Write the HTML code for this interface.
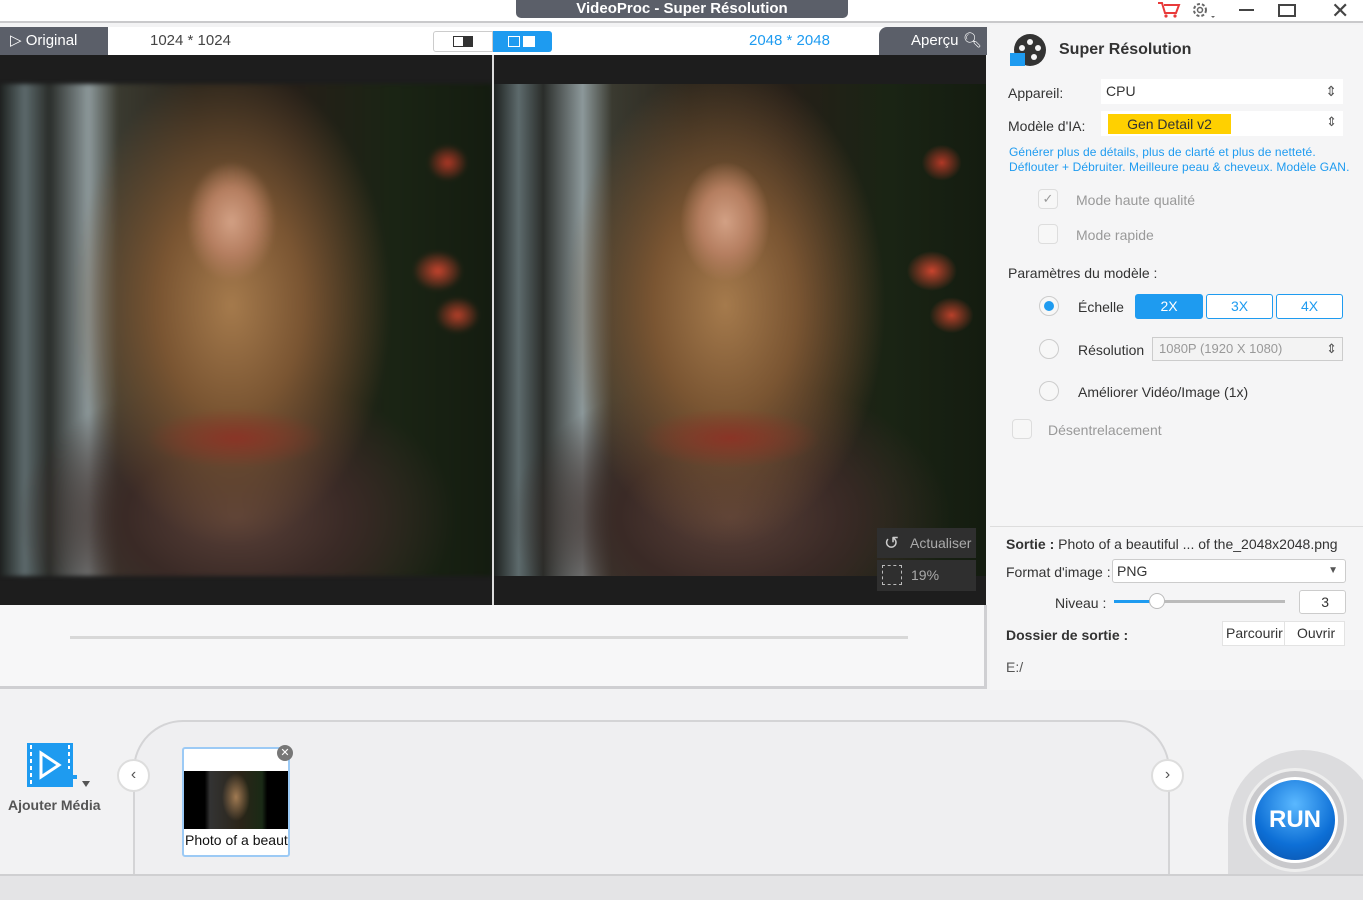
<!DOCTYPE html>
<html><head><meta charset="utf-8">
<style>
*{margin:0;padding:0;box-sizing:border-box}
body{width:1363px;height:900px;overflow:hidden;background:#f3f3f4;font-family:"Liberation Sans",sans-serif;font-size:13px;color:#333;position:relative}
.abs{position:absolute}
.photo{position:absolute;overflow:hidden;
background:
radial-gradient(ellipse 45px 60px at 47% 28%, #d2a084 0%, #b57e60 55%, rgba(150,100,70,0) 100%),
radial-gradient(ellipse 90px 30px at 48% 72%, #8a3426 0%, rgba(100,40,30,0) 100%),
radial-gradient(ellipse 160px 240px at 47% 45%, #a57a4c 0%, #7a5532 45%, rgba(60,40,22,0) 100%),
radial-gradient(ellipse 220px 140px at 48% 88%, #5a4038 0%, #3a2a26 50%, rgba(30,25,22,0) 100%),
radial-gradient(ellipse 25px 20px at 89% 38%, #c8442e 0%, rgba(150,40,30,0) 100%),
radial-gradient(ellipse 22px 18px at 93% 47%, #b8402a 0%, rgba(150,40,30,0) 100%),
radial-gradient(ellipse 20px 18px at 91% 16%, #b03826 0%, rgba(150,40,30,0) 100%),
linear-gradient(90deg, #1e2220 0%, #5d6a6c 5%, #2a2d2a 10%, #8c989a 18%, #3a3a30 24%, #2a251c 40%, #251f18 60%, #1a2414 80%, #141c10 100%);}
.btn{position:absolute;border:1px solid #1e9bf0;color:#1e9bf0;text-align:center;border-radius:3px;font-size:14px;line-height:22px;background:#fff}
.radio{position:absolute;width:20px;height:20px;border-radius:50%;border:1px solid #ccc;background:#f7f7f7}
.chk{position:absolute;width:20px;height:20px;border-radius:4px;border:1px solid #ddd;background:#f7f7f7}
.gray{color:#999}
</style></head><body>
<div class="abs" style="left:0;top:0;width:1363px;height:23px;background:#fff;border-bottom:2px solid #c9c9cb"></div>
<div class="abs" style="left:516px;top:0;width:332px;height:18px;background:#5b5f69;border-radius:0 0 5px 5px;color:#fff;font-weight:bold;font-size:15px;text-align:center;line-height:17px">VideoProc - Super Résolution</div>
<svg class="abs" style="left:1157px;top:1px" width="24" height="18" viewBox="0 0 24 18"><path d="M1 2h4l3 10h11l3-8H7" fill="none" stroke="#e83a3a" stroke-width="2"/><circle cx="9" cy="15" r="1.6" fill="#e83a3a"/><circle cx="18" cy="15" r="1.6" fill="#e83a3a"/></svg>
<svg class="abs" style="left:1190px;top:1px" width="26" height="20" viewBox="0 0 26 20"><circle cx="10" cy="9" r="6" fill="none" stroke="#666" stroke-width="2" stroke-dasharray="3 2"/><circle cx="10" cy="9" r="2.5" fill="none" stroke="#666" stroke-width="1.5"/><path d="M21 15l2 2 2-2z" fill="#666"/></svg>
<div class="abs" style="left:1239px;top:9px;width:15px;height:1.5px;background:#444"></div>
<div class="abs" style="left:1278px;top:4px;width:18px;height:13px;border:2px solid #444"></div>
<div class="abs" style="left:1331px;top:-2px;font-size:22px;color:#444">✕</div>

<div class="abs" style="left:0;top:27px;width:987px;height:28px;background:#fff"></div>
<div class="abs" style="left:0;top:27px;width:108px;height:28px;background:#5b5f69;color:#fff;font-size:15px;line-height:28px;padding-left:10px">▷ Original</div>
<div class="abs" style="left:150px;top:32px;font-size:15px;color:#444">1024 * 1024</div>
<div class="abs" style="left:433px;top:31px;width:60px;height:21px;border:1px solid #ccc;background:#fff;border-radius:3px 0 0 3px"><div class="abs" style="left:19px;top:4px;width:20px;height:11px;border:1.5px solid #333;background:linear-gradient(90deg,#fff 50%,#333 50%)"></div></div>
<div class="abs" style="left:493px;top:31px;width:59px;height:21px;background:#1e9bf0;border-radius:0 3px 3px 0"><div class="abs" style="left:15px;top:5px;width:12px;height:11px;border:1.5px solid #fff"></div><div class="abs" style="left:30px;top:5px;width:12px;height:11px;background:#fff"></div></div>
<div class="abs" style="left:749px;top:32px;font-size:15px;color:#1e9bf0">2048 * 2048</div>
<div class="abs" style="left:879px;top:27px;width:108px;height:28px;background:#5b5f69;color:#fff;font-size:15px;line-height:28px;padding-left:32px;border-radius:8px 0 0 0">Aperçu 🔍︎</div>

<div class="abs" style="left:0;top:55px;width:986px;height:550px;background:#1d1d1d"></div>
<div class="photo" style="left:0;top:84px;width:492px;height:492px;filter:blur(2px)"></div>
<div class="abs" style="left:492px;top:55px;width:2px;height:550px;background:#ddd"></div>
<div class="photo" style="left:494px;top:84px;width:492px;height:492px"></div>
<div class="abs" style="left:877px;top:528px;width:99px;height:30px;background:#2f2f2f;color:#aaa;font-size:14px;line-height:30px;padding-left:33px">Actualiser</div>
<div class="abs" style="left:884px;top:533px;color:#ccc;font-size:18px">↺</div>
<div class="abs" style="left:877px;top:560px;width:99px;height:31px;background:#2f2f2f;color:#aaa;font-size:14px;line-height:31px;padding-left:34px">19%</div>
<div class="abs" style="left:882px;top:565px;width:20px;height:20px;border:1.5px dashed #bbb"></div>
<div class="abs" style="left:0;top:605px;width:987px;height:84px;background:#f7f7f8;border-right:3px solid #cfcfd2;border-bottom:3px solid #cfcfd2"></div>
<div class="abs" style="left:70px;top:636px;width:838px;height:3px;background:#d8d8d8"></div>

<div class="abs" style="left:990px;top:25px;width:373px;height:665px;background:#f5f5f6"></div>
<svg class="abs" style="left:1010px;top:33px" width="38" height="35" viewBox="0 0 38 35"><circle cx="20" cy="17" r="16" fill="#333"/><circle cx="20" cy="9" r="3" fill="#f5f5f6"/><circle cx="12" cy="15" r="3" fill="#f5f5f6"/><circle cx="28" cy="15" r="3" fill="#f5f5f6"/><circle cx="24" cy="24" r="3" fill="#f5f5f6"/><rect x="0" y="20" width="15" height="13" fill="#1e9bf0"/></svg>
<div class="abs" style="left:1059px;top:41px;font-size:16px;font-weight:bold;color:#333">Super Résolution</div>
<div class="abs" style="left:1008px;top:85px;font-size:14px">Appareil:</div>
<div class="abs" style="left:1101px;top:79px;width:242px;height:25px;background:#fff;padding-left:5px;line-height:25px;font-size:14px">CPU<span class="abs" style="right:6px;top:0;color:#555">⇕</span></div>
<div class="abs" style="left:1008px;top:118px;font-size:14px">Modèle d'IA:</div>
<div class="abs" style="left:1101px;top:111px;width:242px;height:25px;background:#fff"><div class="abs" style="left:7px;top:3px;width:123px;height:20px;background:#ffd000;text-align:center;line-height:20px;font-size:14px">Gen Detail v2</div><span class="abs" style="right:6px;top:3px;color:#555">⇕</span></div>
<div class="abs" style="left:1009px;top:145px;font-size:12px;color:#1e9bf0;line-height:15px;white-space:nowrap;letter-spacing:0.1px">Générer plus de détails, plus de clarté et plus de netteté.<br>Déflouter + Débruiter. Meilleure peau &amp; cheveux. Modèle GAN.</div>
<div class="chk" style="left:1038px;top:189px;color:#999;font-size:13px;text-align:center;line-height:18px">✓</div>
<div class="abs gray" style="left:1076px;top:192px;font-size:14px">Mode haute qualité</div>
<div class="chk" style="left:1038px;top:224px"></div>
<div class="abs gray" style="left:1076px;top:227px;font-size:14px">Mode rapide</div>
<div class="abs" style="left:1008px;top:265px;font-size:14px">Paramètres du modèle :</div>
<div class="radio" style="left:1039px;top:296px"><div class="abs" style="left:4px;top:4px;width:10px;height:10px;border-radius:50%;background:#1e9bf0"></div></div>
<div class="abs" style="left:1078px;top:299px;font-size:14px">Échelle</div>
<div class="btn" style="left:1135px;top:294px;width:68px;height:25px;background:#1e9bf0;color:#fff">2X</div>
<div class="btn" style="left:1206px;top:294px;width:67px;height:25px">3X</div>
<div class="btn" style="left:1276px;top:294px;width:67px;height:25px">4X</div>
<div class="radio" style="left:1039px;top:339px"></div>
<div class="abs" style="left:1078px;top:342px;font-size:14px">Résolution</div>
<div class="abs" style="left:1152px;top:337px;width:191px;height:24px;border:1px solid #ccc;background:#f3f3f3;color:#999;font-size:13px;line-height:22px;padding-left:6px">1080P (1920 X 1080)<span class="abs" style="right:5px;top:0;color:#555">⇕</span></div>
<div class="radio" style="left:1039px;top:381px"></div>
<div class="abs" style="left:1078px;top:384px;font-size:14px">Améliorer Vidéo/Image (1x)</div>
<div class="chk" style="left:1012px;top:419px"></div>
<div class="abs gray" style="left:1048px;top:422px;font-size:14px">Désentrelacement</div>

<div class="abs" style="left:990px;top:526px;width:373px;height:1px;background:#ddd"></div>
<div class="abs" style="left:1006px;top:536px;font-size:14px;white-space:nowrap"><b>Sortie :</b> Photo of a beautiful ... of the_2048x2048.png</div>
<div class="abs" style="left:1006px;top:564px;font-size:14px">Format d'image :</div>
<div class="abs" style="left:1112px;top:559px;width:234px;height:24px;border:1px solid #ccc;border-radius:3px;background:#fff;font-size:14px;line-height:22px;padding-left:4px">PNG<span class="abs" style="right:7px;top:0;font-size:10px;color:#555">▼</span></div>
<div class="abs" style="left:1055px;top:595px;font-size:14px">Niveau :</div>
<div class="abs" style="left:1114px;top:600px;width:171px;height:3px;background:#bbb"></div>
<div class="abs" style="left:1114px;top:600px;width:40px;height:3px;background:#1e9bf0"></div>
<div class="abs" style="left:1149px;top:593px;width:16px;height:16px;border-radius:50%;background:#fff;border:1px solid #bbb"></div>
<div class="abs" style="left:1299px;top:590px;width:47px;height:24px;border:1px solid #ccc;border-radius:3px;background:#fff;text-align:right;padding-right:16px;line-height:22px;font-size:14px">3</div>
<div class="abs" style="left:1006px;top:627px;font-size:14px;font-weight:bold">Dossier de sortie :</div>
<div class="abs" style="left:1222px;top:621px;width:123px;height:25px;background:#fff;border:1px solid #e3e3e3;font-size:14px;line-height:23px"><span class="abs" style="left:3px">Parcourir</span><span class="abs" style="left:61px;top:0;width:1px;height:23px;background:#e3e3e3"></span><span class="abs" style="left:74px">Ouvrir</span></div>
<div class="abs" style="left:1006px;top:659px;font-size:14px;color:#555">E:/</div>

<div class="abs" style="left:0;top:690px;width:1363px;height:185px;background:#f2f2f3"></div>
<div class="abs" style="left:133px;top:720px;width:1037px;height:155px;border:2px solid #d4d4d6;border-radius:50px 50px 0 0;border-bottom:none;background:#efeff1"></div>
<div class="abs" style="left:1228px;top:750px;width:150px;height:125px;border-radius:75px 75px 0 0;background:#dcdcde"></div>
<div class="abs" style="left:0;top:874px;width:1363px;height:26px;background:#e4e4e6;border-top:2px solid #cfcfd1"></div>
<svg class="abs" style="left:25px;top:741px" width="70" height="50" viewBox="0 0 70 50"><rect x="2" y="2" width="46" height="44" fill="#1e9bf0"/><path d="M6 4v40M44 4v40" stroke="#fff" stroke-width="2" stroke-dasharray="4 3"/><path d="M16 12l18 12-18 12z" fill="none" stroke="#fff" stroke-width="3"/><path d="M44 28v16M36 36h16" stroke="#1e9bf0" stroke-width="4"/><path d="M57 40l4 6 4-6z" fill="#555"/></svg>
<div class="abs" style="left:8px;top:797px;font-size:14px;font-weight:bold;color:#555">Ajouter Média</div>
<div class="abs" style="left:117px;top:759px;width:33px;height:33px;border-radius:50%;background:#fff;border:2px solid #ddd;text-align:center;line-height:28px;color:#555;font-size:16px">‹</div>
<div class="abs" style="left:1151px;top:759px;width:33px;height:33px;border-radius:50%;background:#fff;border:2px solid #ddd;text-align:center;line-height:28px;color:#555;font-size:16px">›</div>
<div class="abs" style="left:182px;top:747px;width:108px;height:110px;border:2px solid #9ccaf5;background:#fff;border-radius:3px"></div>
<div class="abs" style="left:184px;top:771px;width:104px;height:58px;background:radial-gradient(ellipse 14px 24px at 50% 45%,#a07a52,rgba(0,0,0,0)),linear-gradient(90deg,#000 20%,#333 25%,#2a2418 55%,#1a2a16 75%,#000 80%)"></div>
<div class="abs" style="left:185px;top:832px;font-size:14px;color:#111">Photo of a beaut</div>
<div class="abs" style="left:277px;top:745px;width:16px;height:16px;border-radius:50%;background:#777;color:#fff;font-size:11px;text-align:center;line-height:16px">✕</div>
<div class="abs" style="left:1243px;top:768px;width:104px;height:104px;border-radius:50%;background:#c9c9cc;border:3px solid #eee"></div>
<div class="abs" style="left:1252px;top:777px;width:86px;height:86px;border-radius:50%;background:radial-gradient(circle at 50% 30%,#5ab8ff,#0d6fd6 60%,#0a4fa5);border:3px solid #fff;color:#fff;font-weight:bold;font-size:24px;text-align:center;line-height:80px">RUN</div>
</body></html>
